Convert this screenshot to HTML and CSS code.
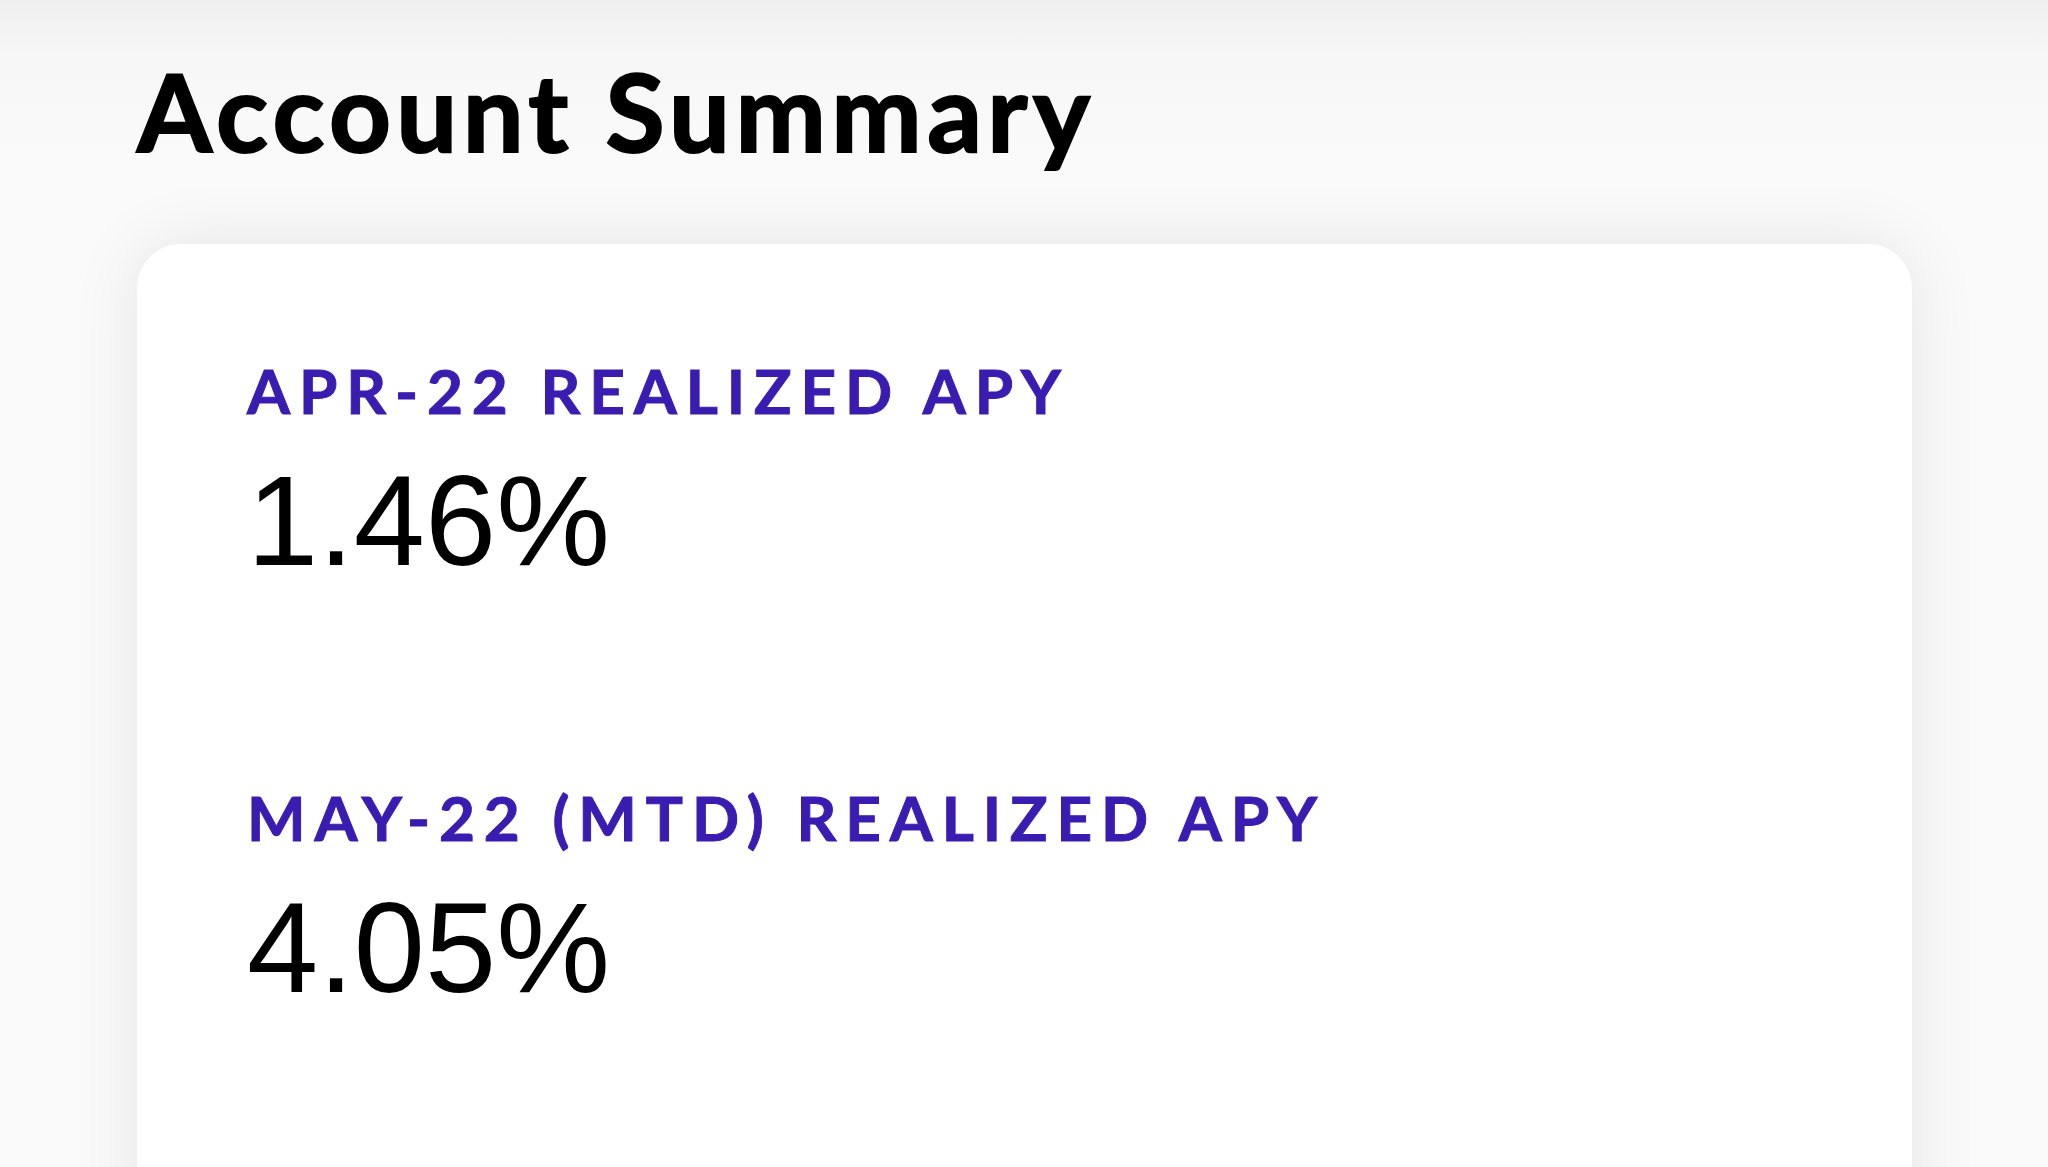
FILE: index.html
```html
<!DOCTYPE html>
<html lang="en">
<head>
<meta charset="utf-8">
<title>Account Summary</title>
<link rel="stylesheet" href="styles.css">
</head>
<body>
<main class="page">
  <h1 class="title">Account Summary</h1>
  <section class="card">
    <div class="stat">
      <div class="stat-label">APR-22 REALIZED APY</div>
      <div class="stat-value">1.46%</div>
    </div>
    <div class="stat">
      <div class="stat-label">MAY-22 (MTD) REALIZED APY</div>
      <div class="stat-value">4.05%</div>
    </div>
  </section>
</main>
</body>
</html>
```

FILE: styles.css
```css
html, body {
  margin: 0;
  padding: 0;
  height: 100%;
  overflow: hidden;
}
body {
  background: linear-gradient(to bottom, #efefef 0px, #f7f7f7 60px, #fafafa 160px, #fafafa 100%);
  font-family: Lato, "Noto Sans", sans-serif;
}
.page {
  padding: 56px 136px 0 137px;
}
.title {
  margin: 0;
  font-size: 108px;
  line-height: 1;
  font-weight: 700;
  color: #000;
  letter-spacing: 0.05em;
  -webkit-text-stroke: 2px #000;
}
.card {
  margin-top: 80px;
  background: #fff;
  border-radius: 44px;
  box-shadow: 0 0 70px rgba(0, 0, 0, 0.09);
  padding: 115px 110px 0 110px;
  height: 1200px;
  display: flex;
  flex-direction: column;
  gap: 201px;
}
.stat {
  display: flex;
  flex-direction: column;
  gap: 34px;
}
.stat-label {
  font-size: 62px;
  line-height: 1;
  font-weight: 700;
  color: #3a1cb0;
  letter-spacing: 0.143em;
  -webkit-text-stroke: 1px #3a1cb0;
}
.stat-value {
  font-family: "Liberation Sans", Arial, sans-serif;
  font-size: 128px;
  line-height: 1;
  font-weight: 400;
  color: #000;
  margin-top: 2px;
}
```
